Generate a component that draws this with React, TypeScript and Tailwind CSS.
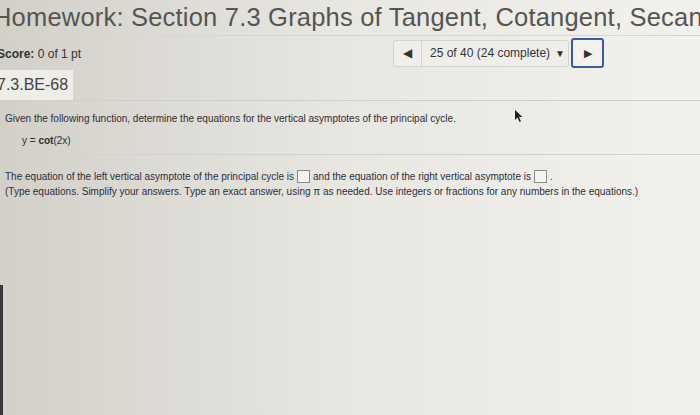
import React from "react";

const font = { fontFamily: '"Liberation Sans", Arial, sans-serif' };

export default function App() {
  return (
    <div
      className="relative w-[700px] h-[415px] overflow-hidden bg-linear-to-r from-[#d2d0c9] via-[#e9e7e2] to-[#f3f1ed] text-[#3a3a3a]"
      style={font}
    >
      {/* ── Title ── */}
      <div className="h-[36px] border-b border-[#d6d5d0] overflow-hidden">
        <h1 className="-ml-[7px] whitespace-nowrap text-[25.5px] leading-[32px] pt-[1px] text-[#555552] tracking-[0.2px]">
          Homework: Section 7.3 Graphs of Tangent, Cotangent, Secant
        </h1>
      </div>

      {/* ── Score + navigation ── */}
      <div className="flex items-center h-[34px]">
        <div className="-ml-[3px] w-[396px] text-[12px] text-[#333] pt-[2px]">
          <span className="font-bold">Score:</span> 0 of 1 pt
        </div>
        <div className="flex items-stretch h-[27px] border border-[#d4d3ce] rounded-[3px] bg-[#efeeea]">
          <button className="w-[28px] flex items-center justify-center border-r border-[#d4d3ce] text-[#333] text-[12px]">
            ◀
          </button>
          <div className="w-[146px] flex items-center pl-[8px] text-[12px] text-[#333]">
            25 of 40 (24 complete)
            <span className="ml-[5px] text-[10px]">▼</span>
          </div>
        </div>
        <button className="ml-[2px] w-[33px] h-[30px] flex items-center justify-center border-2 border-[#3b5c9c] rounded-[3px] text-[#333] text-[11px] bg-[#f2f1ed]">
          ▶
        </button>
      </div>

      {/* ── Question id ── */}
      <div className="h-[31px] border-b border-[#cfcec8] flex items-center">
        <div className="-ml-[3px] pr-[5px] h-[30px] flex items-center bg-[#eeede8] text-[16px] text-[#444]">
          7.3.BE-68
        </div>
      </div>

      {/* ── Question text ── */}
      <div className="h-[54px] border-b border-[#d2d1cb] pl-[5px] pt-[11px] text-[10px] text-[#2e2e36]">
        <p className="leading-[13px]">
          Given the following function, determine the equations for the vertical asymptotes of the principal cycle.
        </p>
        <p className="mt-[9px] pl-[17px] leading-[13px]">
          y = <span className="font-bold">cot</span>(2x)
        </p>
      </div>

      {/* ── Answer ── */}
      <div className="pl-[5px] pt-[14px] text-[10px] text-[#2e2e3a] leading-[15px]">
        <p className="flex items-center">
          The equation of the left vertical asymptote of the principal cycle is
          <span className="inline-block w-[13px] h-[13px] mx-[3px] border border-[#8a8a8a] bg-[#f4f4f2]" />
          and the equation of the right vertical asymptote is
          <span className="inline-block w-[13px] h-[13px] mx-[3px] border border-[#8a8a8a] bg-[#f4f4f2]" />
          .
        </p>
        <p>
          (Type equations. Simplify your answers. Type an exact answer, using π as needed. Use integers or fractions for any numbers in the equations.)
        </p>
      </div>

      {/* cursor */}
      <svg className="absolute left-[514px] top-[109px]" width="10" height="14" viewBox="0 0 10 14">
        <path d="M1 1 L1 11 L3.5 8.5 L5.5 13 L7 12.3 L5 8 L8.5 8 Z" fill="#222" />
      </svg>

      {/* dark edge bottom-left */}
      <div className="absolute left-0 top-[285px] w-[3px] h-[130px] bg-[#3a3a3a]" />
    </div>
  );
}
